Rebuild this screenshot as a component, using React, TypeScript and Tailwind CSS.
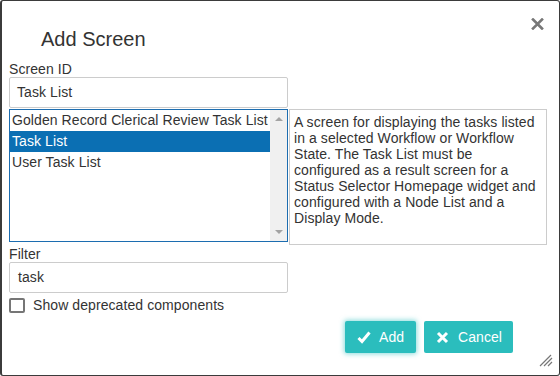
import React from 'react';

const items = ['Golden Record Clerical Review Task List', 'Task List', 'User Task List'];

const App: React.FC = () => {
  return (
    <div className="relative w-[560px] h-[376px] bg-white border border-l-2 border-[#3b3b3b] rounded-[3px] font-['Liberation_Sans',Arial,sans-serif] text-[14px] tracking-[0.08px] text-[#333]">
      {/* close */}
      <button className="absolute right-[15px] top-[17px] w-[13px] h-[12px] flex items-center justify-center">
        <svg width="13" height="12" viewBox="0 0 13 12">
          <path d="M2 1.5 L11 10.5 M11 1.5 L2 10.5" stroke="#777" strokeWidth="2.6" strokeLinecap="square" />
        </svg>
      </button>

      <div className="pl-[39px] pt-[27px] text-[20px] leading-[22px] tracking-normal">Add Screen</div>

      <div className="pl-[7px] mt-[11px] flex flex-col">
        <label className="leading-[16px]">Screen ID</label>
        <div className="w-[279px] h-[31px] border border-[#ccc] rounded-[2px] flex items-center pl-[7px]">Task List</div>

        <div className="flex items-start mt-[1px]">
          <div className="w-[279px] h-[133px] border border-[#1c6db0] flex">
            <div className="flex-1 flex flex-col">
              {items.map((it, i) => (
                <div
                  key={it}
                  className={`h-[21px] leading-[21px] pl-[2px] whitespace-nowrap overflow-hidden ${i === 1 ? 'bg-[#0b6fb3] text-white' : ''}`}
                >
                  {it}
                </div>
              ))}
            </div>
            <div className="w-[17px] bg-[#f0f0f0] flex flex-col justify-between items-center py-[7px]">
              <div className="w-0 h-0 border-l-[4px] border-r-[4px] border-b-[4px] border-l-transparent border-r-transparent border-b-[#a3a3a3]" />
              <div className="w-0 h-0 border-l-[4px] border-r-[4px] border-t-[4px] border-l-transparent border-r-transparent border-t-[#a3a3a3]" />
            </div>
          </div>
          <div className="w-[258px] h-[136px] border border-[#ccc] ml-[1px] pl-[4px] pt-[4px] pr-[7px] leading-[16px]">
            A screen for displaying the tasks listed in a selected Workflow or Workflow State. The Task List must be configured as a result screen for a Status Selector Homepage widget and configured with a Node List and a Display Mode.
          </div>
        </div>

        <label className="leading-[16px] mt-[1px]">Filter</label>
        <div className="w-[279px] h-[31px] border border-[#ccc] rounded-[2px] flex items-center pl-[8px]">task</div>

        <div className="flex items-center mt-[4px] h-[16px]">
          <div className="w-[16px] h-[15px] border-2 border-[#767676] rounded-[2px]" />
          <span className="ml-[8px] leading-[16px]">Show deprecated components</span>
        </div>

        <div className="flex justify-end gap-[8px] pr-[46px] mt-[8px]">
          <button className="w-[71px] h-[32px] bg-[#2bbdbd] rounded-[2px] text-white flex items-center pl-[12px] shadow-[0_0_5px_1px_rgba(43,189,189,0.55)]">
            <svg width="14" height="13" viewBox="0 0 14 13">
              <path d="M1.5 7 L5 10.5 L12.5 1.5" fill="none" stroke="white" strokeWidth="3" strokeLinejoin="miter" />
            </svg>
            <span className="ml-[8px]">Add</span>
          </button>
          <button className="w-[89px] h-[32px] bg-[#2bbdbd] rounded-[2px] text-white flex items-center pl-[12px]">
            <svg width="13" height="13" viewBox="0 0 13 13">
              <path d="M2 2 L11 11 M11 2 L2 11" stroke="white" strokeWidth="3" />
            </svg>
            <span className="ml-[9px]">Cancel</span>
          </button>
        </div>
      </div>

      {/* resize grip */}
      <svg className="absolute right-[6px] bottom-[8px]" width="14" height="13" viewBox="0 0 14 13">
        <path d="M1 12 L12 1 M5 12 L13 4 M9 12 L13 8" stroke="#777" strokeWidth="1.2" />
      </svg>
    </div>
  );
};

export default App;
